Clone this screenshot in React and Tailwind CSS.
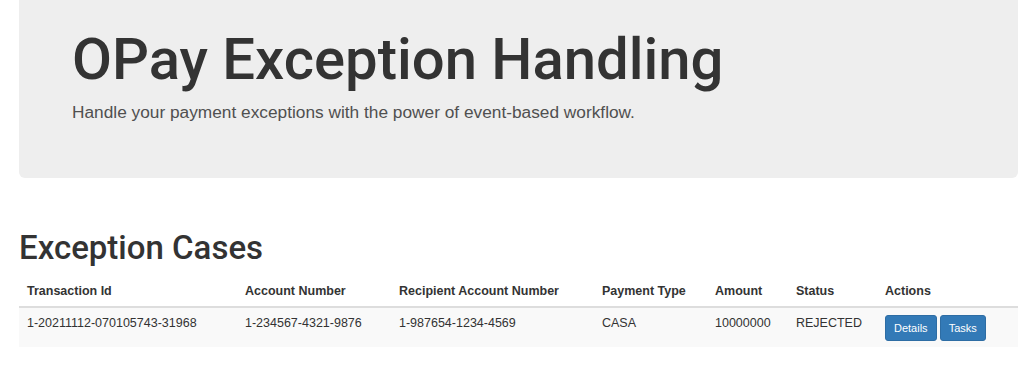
import React from 'react'

const cases = [
  {
    id: '1-20211112-070105743-31968',
    account: '1-234567-4321-9876',
    recipient: '1-987654-1234-4569',
    type: 'CASA',
    amount: '10000000',
    status: 'REJECTED',
  },
];

const App = () => {
  return (
    <main className="min-h-screen bg-white text-[#333] font-['Liberation_Sans',Arial,sans-serif]">
      <div className="pl-[19px] pr-[6px]">
        {/* jumbotron */}
        <div className="bg-[#eee] rounded-b-[6px] h-[178px] pl-[53px] pt-[28px]">
          <h1 className="text-[58px] leading-[1.1] font-medium text-[#333] font-['Roboto',Arial,sans-serif]">OPay Exception Handling</h1>
          <p className="mt-[8px] text-[17.3px] font-light text-[#505050]">
            Handle your payment exceptions with the power of event-based workflow.
          </p>
        </div>

        <h2 className="mt-[52px] text-[33px] leading-[1.1] font-medium font-['Roboto',Arial,sans-serif]">Exception Cases</h2>

        <table className="w-full mt-[8px] table-fixed border-collapse text-[12.5px]">
          <thead>
            <tr className="border-b-2 border-[#ddd] text-left">
              <th className="w-[218px] px-2 pt-2 pb-[5px] font-bold">Transaction Id</th>
              <th className="w-[154px] px-2 pt-2 pb-[5px] font-bold">Account Number</th>
              <th className="w-[203px] px-2 pt-2 pb-[5px] font-bold">Recipient Account Number</th>
              <th className="w-[113px] px-2 pt-2 pb-[5px] font-bold">Payment Type</th>
              <th className="w-[81px] px-2 pt-2 pb-[5px] font-bold">Amount</th>
              <th className="w-[89px] px-2 pt-2 pb-[5px] font-bold">Status</th>
              <th className="px-2 pt-2 pb-[5px] font-bold">Actions</th>
            </tr>
          </thead>
          <tbody>
            {cases.map((c) => (
              <tr key={c.id} className="bg-[#f9f9f9] h-[40px]">
                <td className="px-2 align-top pt-[6px]">{c.id}</td>
                <td className="px-2 align-top pt-[6px]">{c.account}</td>
                <td className="px-2 align-top pt-[6px]">{c.recipient}</td>
                <td className="px-2 align-top pt-[6px]">{c.type}</td>
                <td className="px-2 align-top pt-[6px]">{c.amount}</td>
                <td className="px-2 align-top pt-[6px]">{c.status}</td>
                <td className="px-2 align-top pt-[7px]">
                  <div className="flex gap-[3px]">
                    <button className="h-[26px] px-[8px] rounded-[3px] bg-[#337ab7] border border-[#2e6da4] text-white text-[11px]">
                      Details
                    </button>
                    <button className="h-[26px] px-[8px] rounded-[3px] bg-[#337ab7] border border-[#2e6da4] text-white text-[11px]">
                      Tasks
                    </button>
                  </div>
                </td>
              </tr>
            ))}
          </tbody>
        </table>
      </div>
    </main>
  );
};

export default App
